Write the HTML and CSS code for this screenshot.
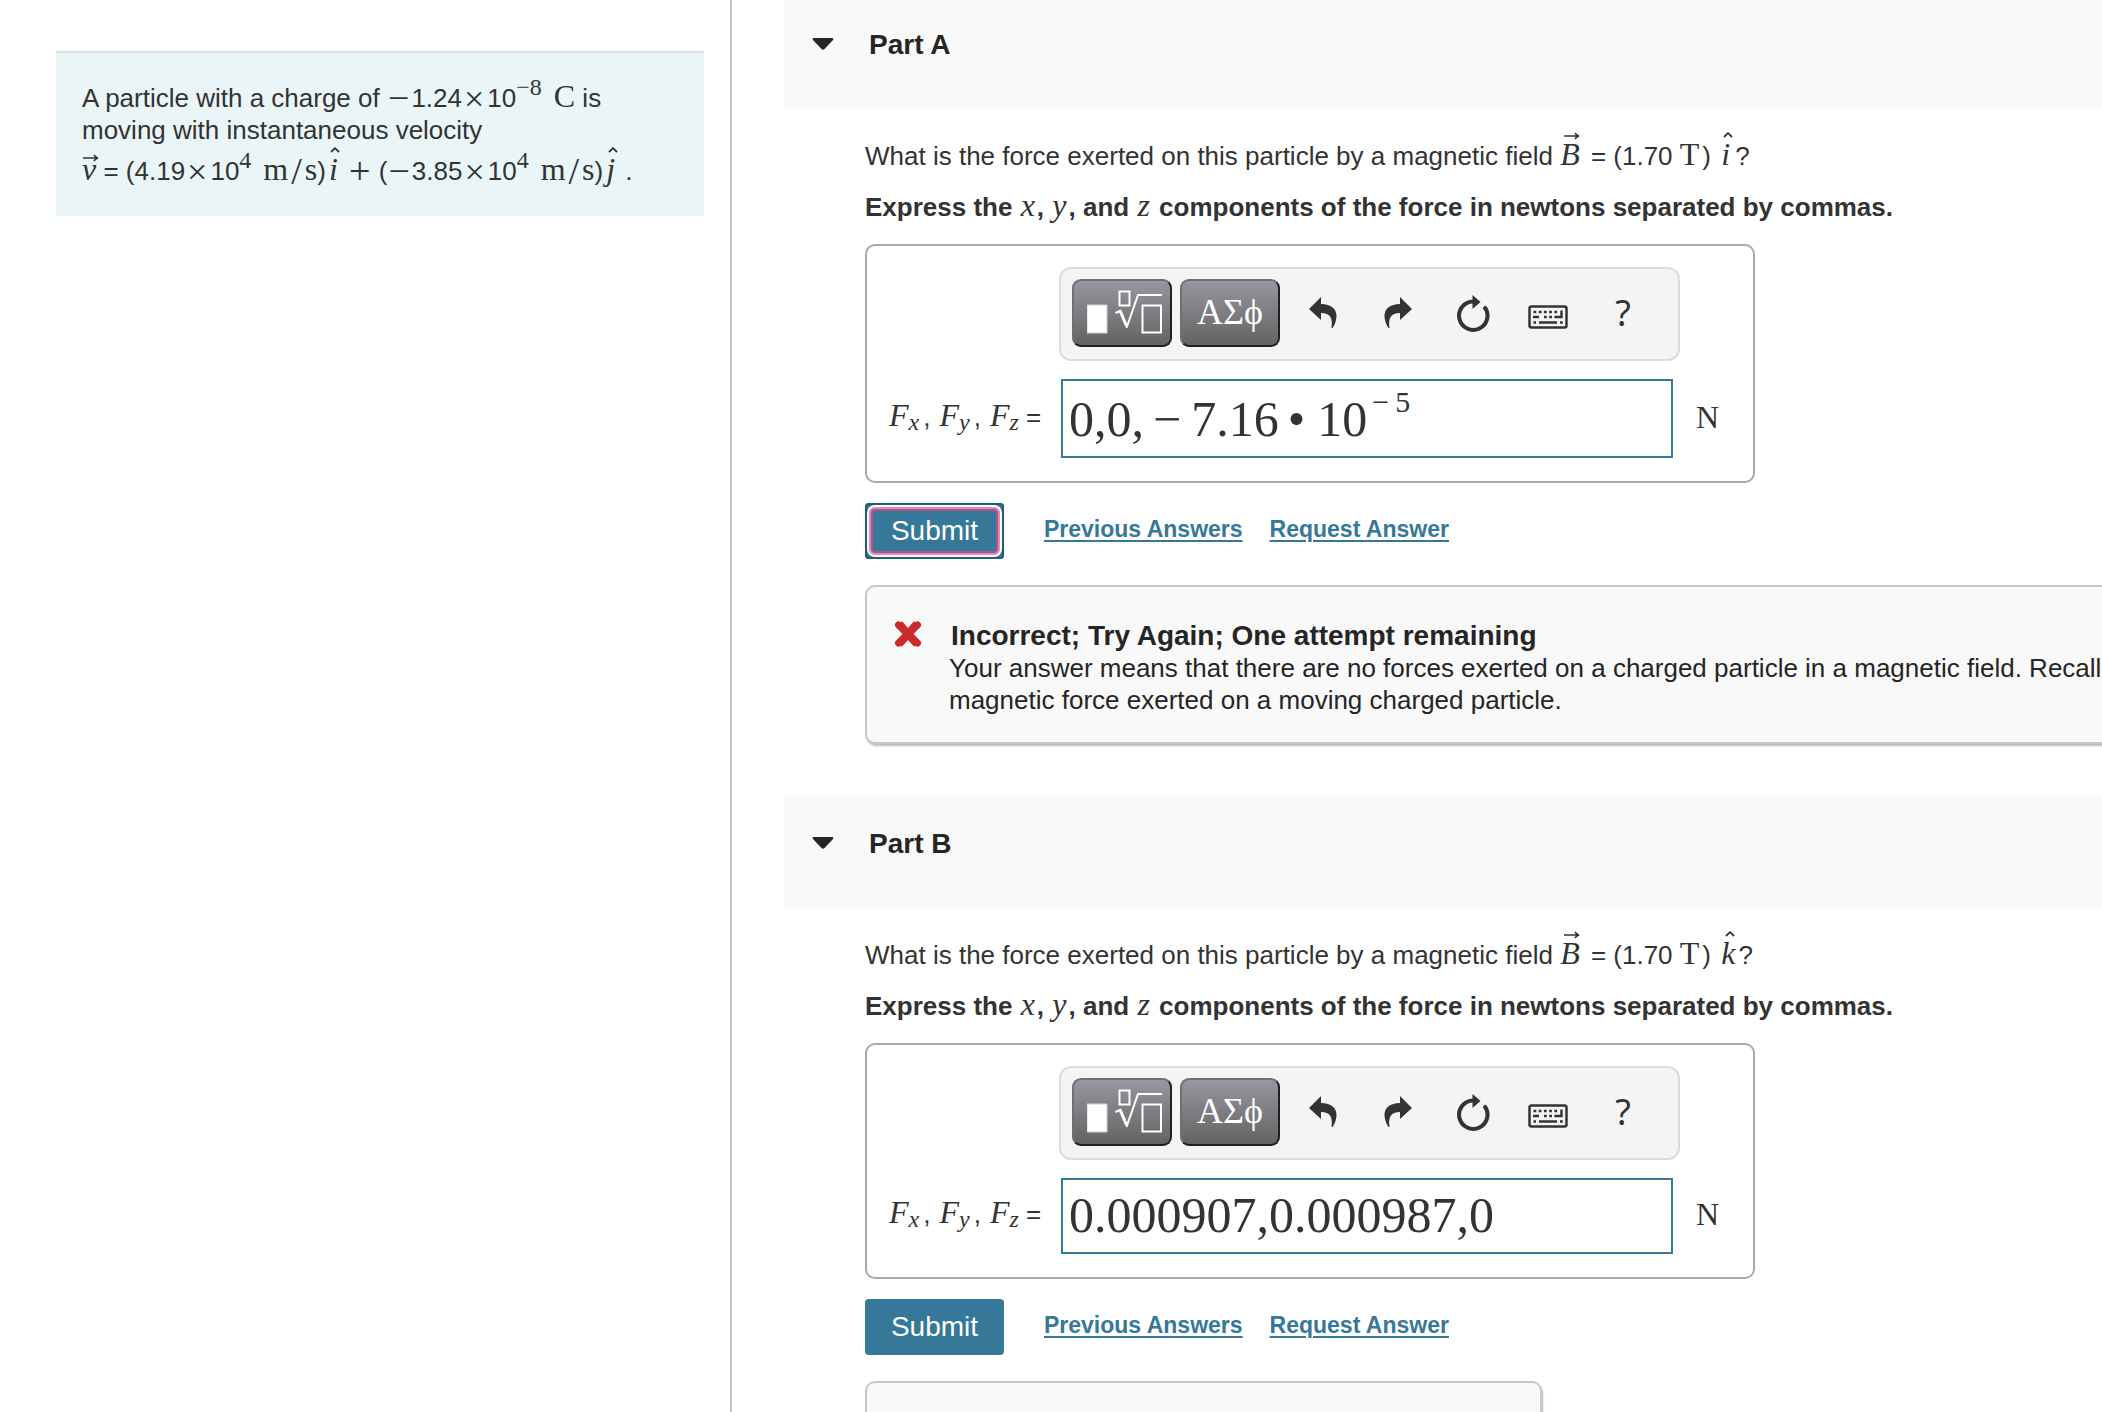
FILE: index.html
```html
<!DOCTYPE html>
<html lang="en">
<head>
<meta charset="utf-8">
<title>Force on a moving charge</title>
<link rel="stylesheet" href="styles.css">
</head>
<body>
<svg class="sprite" aria-hidden="true">
  <symbol id="vec" viewBox="0 0 16 8"><path d="M0 4H14M11 1Q12.500 3.500 15 4Q12.500 4.500 11 7" fill="none" stroke="currentColor" stroke-width="1.500"/></symbol>
  <symbol id="hat" viewBox="0 0 10 6"><path d="M1 5L5 1.200L9 5" fill="none" stroke="currentColor" stroke-width="1.800"/></symbol>
  <symbol id="caret" viewBox="0 0 22 12"><path d="M1.500 0H20.500Q22 .500 21 2L12.500 11Q11 12.500 9.500 11L1 2Q0 .500 1.500 0Z" fill="currentColor"/></symbol>
  <symbol id="template" viewBox="0 0 76 44">
    <path d="M0 15H20V43H0Z" fill="#fff" stroke="#cfcfd2"/>
    <path d="M32.500 1.500H42.500V15.500H32.500Z" fill="none" stroke="#fff" stroke-width="2"/>
    <path d="M55.500 15.500H74V42.500H55.500Z" fill="none" stroke="#fff" stroke-width="2"/>
    <path d="M28.500 23L34 20.500" fill="none" stroke="#fff" stroke-width="2"/>
    <path d="M33 20.500L39.500 36" fill="none" stroke="#fff" stroke-width="3"/>
    <path d="M39.500 38L51 5H75" fill="none" stroke="#fff" stroke-width="2"/>
  </symbol>
  <symbol id="undo" viewBox="0 0 28 32"><path d="M0 12L12 0V7C22 7 28 12 27.500 20C27 25 25 29 23.500 31H22.500C24 21 21 16 12 16V23Z" fill="currentColor"/></symbol>
  <symbol id="redo" viewBox="0 0 28 32"><path d="M28 12L16 0V7C6 7 0 12 .500 20C1 25 3 29 4.500 31H5.500C4 21 7 16 16 16V23Z" fill="currentColor"/></symbol>
  <symbol id="reset" viewBox="0 0 34 38"><path d="M17 7.500A14.200 14.200 0 1 0 28.500 13" fill="none" stroke="currentColor" stroke-width="4"/><path d="M16.500 1L24.500 8L16.500 15Z" fill="currentColor"/><path d="M26.500 14.500L29 11.500L32 16Z" fill="currentColor"/></symbol>
  <symbol id="keyboard" viewBox="0 0 40 24">
    <rect x="1.500" y="1.500" width="37" height="21" rx="2" fill="none" stroke="currentColor" stroke-width="2.500"/>
    <path d="M5.500 7H31M16 12H29M5.500 17.500H8M32 17.500H35" fill="none" stroke="currentColor" stroke-width="2.400" stroke-dasharray="2.800 2.400"/>
    <path d="M5 12H11M11 17.500H29M29 12H34.500M33.500 5.500V13" fill="none" stroke="currentColor" stroke-width="2.400"/>
  </symbol>
  <symbol id="cross" viewBox="0 0 28 28"><path d="M5 4L23 24M23 4L5 24" fill="none" stroke="#cb2a2d" stroke-width="8"/><path d="M4.500 5L23.500 23M23.500 5L4.500 23" fill="none" stroke="#cb2a2d" stroke-width="7" stroke-linecap="round"/></symbol>
</svg>
<div class="page">
  <aside class="sidebar">
    <section class="problem">
      <p>A particle with a charge of <span class="op neg">−</span>1.24<span class="op">×</span>10<sup class="exp">−8</sup><span class="unit-sym">C</span> is</p>
      <p>moving with instantaneous velocity</p>
      <p class="formula"><span class="var accent">v<svg class="vec"><use href="#vec"/></svg></span> = (4.19<span class="op">×</span>10<sup class="exp">4</sup><span class="unit-sym">m<span class="slash">/</span>s</span>)<span class="var accent unit-vec">i<svg class="hat"><use href="#hat"/></svg></span> <span class="op plus">+</span> (<span class="op neg">−</span>3.85<span class="op">×</span>10<sup class="exp">4</sup><span class="unit-sym">m<span class="slash">/</span>s</span>)<span class="var accent unit-vec">j<svg class="hat"><use href="#hat"/></svg></span> .</p>
    </section>
  </aside>
  <main class="content">
    <section class="part">
      <header class="part-header"><svg class="caret"><use href="#caret"/></svg><h2>Part A</h2></header>
      <div class="part-body">
        <p class="question">What is the force exerted on this particle by a magnetic field <span class="var accent field-vec">B<svg class="vec"><use href="#vec"/></svg></span> = (1.70 <span class="sym">T</span>) <span class="var accent unit-vec">i<svg class="hat"><use href="#hat"/></svg></span>&#8202;?</p>
        <p class="instruction">Express the <span class="var">x</span>, <span class="var">y</span>, and <span class="var">z</span> components of the force in newtons separated by commas.</p>
        <div class="answer-box">
          <div class="toolbar">
            <button class="key" aria-label="Templates"><svg class="template"><use href="#template"/></svg></button>
            <button class="key">ΑΣϕ</button>
            <div class="tools">
              <button class="tool" aria-label="Undo"><svg class="arrow"><use href="#undo"/></svg></button>
              <button class="tool" aria-label="Redo"><svg class="arrow"><use href="#redo"/></svg></button>
              <button class="tool" aria-label="Reset"><svg class="reset"><use href="#reset"/></svg></button>
              <button class="tool" aria-label="Keyboard"><svg class="keyboard"><use href="#keyboard"/></svg></button>
              <button class="tool help">?</button>
            </div>
          </div>
          <div class="answer-row">
            <span class="answer-label" id="label-a"><span class="var">F</span><sub>x</sub><span class="sep">,</span><span class="var">F</span><sub>y</sub><span class="sep">,</span><span class="var">F</span><sub>z</sub> =</span>
            <div class="field" role="textbox" contenteditable="true" aria-labelledby="label-a">0,0,<span class="minus">−</span>7.16<span class="dot">•</span>10<sup class="power"><span>−</span>5</sup></div>
            <span class="answer-unit">N</span>
          </div>
        </div>
        <div class="actions">
          <button class="submit focused">Submit</button>
          <a href="#previous-a">Previous Answers</a>
          <a href="#request-a">Request Answer</a>
        </div>
        <div class="feedback wide">
          <svg class="cross"><use href="#cross"/></svg>
          <div>
            <h3>Incorrect; Try Again; One attempt remaining</h3>
            <p>Your answer means that there are no forces exerted on a charged particle in a magnetic field. Recall<br>magnetic force exerted on a moving charged particle.</p>
          </div>
        </div>
      </div>
    </section>
    <section class="part">
      <header class="part-header"><svg class="caret"><use href="#caret"/></svg><h2>Part B</h2></header>
      <div class="part-body">
        <p class="question">What is the force exerted on this particle by a magnetic field <span class="var accent field-vec">B<svg class="vec"><use href="#vec"/></svg></span> = (1.70 <span class="sym">T</span>) <span class="var accent unit-vec">k<svg class="hat"><use href="#hat"/></svg></span>?</p>
        <p class="instruction">Express the <span class="var">x</span>, <span class="var">y</span>, and <span class="var">z</span> components of the force in newtons separated by commas.</p>
        <div class="answer-box">
          <div class="toolbar">
            <button class="key" aria-label="Templates"><svg class="template"><use href="#template"/></svg></button>
            <button class="key">ΑΣϕ</button>
            <div class="tools">
              <button class="tool" aria-label="Undo"><svg class="arrow"><use href="#undo"/></svg></button>
              <button class="tool" aria-label="Redo"><svg class="arrow"><use href="#redo"/></svg></button>
              <button class="tool" aria-label="Reset"><svg class="reset"><use href="#reset"/></svg></button>
              <button class="tool" aria-label="Keyboard"><svg class="keyboard"><use href="#keyboard"/></svg></button>
              <button class="tool help">?</button>
            </div>
          </div>
          <div class="answer-row">
            <label class="answer-label" for="answer-b"><span class="var">F</span><sub>x</sub><span class="sep">,</span><span class="var">F</span><sub>y</sub><span class="sep">,</span><span class="var">F</span><sub>z</sub> =</label>
            <input class="field" id="answer-b" type="text" value="0.000907,0.000987,0">
            <span class="answer-unit">N</span>
          </div>
        </div>
        <div class="actions">
          <button class="submit">Submit</button>
          <a href="#previous-b">Previous Answers</a>
          <a href="#request-b">Request Answer</a>
        </div>
        <div class="feedback short"></div>
      </div>
    </section>
  </main>
</div>
</body>
</html>
```

FILE: styles.css
```css
* { box-sizing: border-box; }
body {
  margin: 0;
  background: #fff;
  color: #333;
  font: 26px/32px "Liberation Sans", Arial, sans-serif;
}
p, h2, h3 { margin: 0; }
svg { display: block; }
button { margin: 0; padding: 0; font-family: inherit; cursor: pointer; }
.sprite { position: absolute; width: 0; height: 0; }

.page {
  display: grid;
  grid-template-columns: 732px minmax(0, 1fr);
  height: 100vh;
  overflow: hidden;
}
.sidebar { padding: 51px 26px 0 56px; border-right: 2px solid #bdc7d6; }
.problem {
  padding: 29px 0 29px 26px;
  background: #eaf5f7;
  border-top: 2px solid #dadfdf;
}
.formula { padding-top: 9px; white-space: nowrap; }

/* Mathematical notation */
.var, .sym, .op, .unit-sym, .exp, sub { line-height: 0; font-family: "Liberation Serif", "Times New Roman", serif; font-weight: 400; }
.var { font-size: 32px; font-style: italic; }
.sym { margin-right: 3px; font-size: 32px; }
.op { padding: 0 3px 0 2px; font-size: 36px; vertical-align: -4px; }
.op.neg { padding: 0 2px 0 1px; font-size: 38px; vertical-align: -4px; }
.op.plus { padding: 0 1px; font-size: 38px; vertical-align: -4px; }
.unit-sym { margin-left: 12px; font-size: 32px; }
.slash { padding: 0 3px; font-size: 38px; vertical-align: -4px; }
.exp { font-size: 24px; vertical-align: 12px; }
sub { font-size: 24px; font-style: italic; vertical-align: -4px; }
.accent { position: relative; }
.field-vec { margin-right: 4px; }
.unit-vec { margin: 0 3px; }
.instruction .var { margin: 0 2px 0 1px; }
.vec, .hat { position: absolute; left: 50%; }
.vec { width: 16px; height: 8px; margin-left: -6px; top: -4px; }
.formula .vec { top: 3px; }
.hat { width: 10px; height: 6px; margin-left: -3px; top: -4px; }

.content { margin-top: -3px; padding-left: 52px; min-width: 0; overflow: hidden; }
.part-header {
  display: flex;
  align-items: center;
  gap: 35px;
  padding: 32px 28px 48px;
  background: #f9f9f9;
  color: #252525;
}
.caret { width: 22px; height: 12px; margin-bottom: 2px; }
h2, h3 { font-size: 28px; line-height: 32px; font-weight: 700; }
.part-body { padding: 31px 0 52px 81px; }
.question { margin-bottom: 19px; }
.instruction { margin-bottom: 21px; font-weight: 700; }

.answer-box {
  width: 890px;
  padding: 21px 21px 23px;
  border: 2px solid #a9a9a9;
  border-radius: 10px;
}
.toolbar {
  display: flex;
  align-items: flex-start;
  gap: 8px;
  width: 621px;
  height: 94px;
  margin: 0 0 18px 171px;
  padding: 10px 11px;
  background: #f4f4f4;
  border: 2px solid #dcdcdc;
  border-radius: 12px;
}
.key {
  display: flex;
  align-items: center;
  justify-content: center;
  width: 100px;
  height: 68px;
  padding-bottom: 2px;
  color: #fff;
  background: linear-gradient(#98969f, #636363);
  border: 2px solid;
  border-color: #707070 #202020 #202020 #707070;
  border-radius: 9px;
  font: 36px/40px "Liberation Serif", serif;
}
.template { width: 76px; height: 44px; margin-left: 6px; }
.tools { display: flex; gap: 9px; padding-left: 2px; }
.tool {
  display: flex;
  align-items: center;
  justify-content: center;
  width: 66px;
  height: 68px;
  color: #333;
  background: none;
  border: 0;
}
.arrow { width: 28px; height: 32px; }
.reset { width: 34px; height: 38px; }
.keyboard { width: 40px; height: 24px; margin-top: 8px; }
.help { font: 36px/40px "Noto Sans", sans-serif; }

.answer-row { display: flex; align-items: center; }
.answer-label { width: 173px; padding: 0 0 4px 1px; white-space: nowrap; }
.sep { padding: 0 9px 0 4px; }
.field {
  width: 612px;
  height: 76px;
  padding: 0 6px 2px;
  color: #333;
  background: #fff;
  border: 2px solid #36789a;
  border-radius: 0;
  font: 50px/72px "Liberation Serif", "Times New Roman", serif;
  white-space: nowrap;
}
div.field { height: 79px; line-height: 77px; }
.minus { padding: 0 10px 0 9px; }
.dot { padding: 0 12px 0 9px; }
.power { font-size: 30px; line-height: 0; vertical-align: 24px; }
.power span { padding: 0 6px 0 5px; }
.answer-unit { margin-left: 23px; padding-bottom: 4px; font: 32px/32px "Liberation Serif", serif; }

.actions { display: flex; align-items: center; gap: 27px; margin: 20px 0 26px; }
.submit {
  position: relative;
  width: 139px;
  height: 56px;
  margin-right: 13px;
  color: #fff;
  background: #36789a;
  border: 0;
  border-radius: 4px;
  font-size: 28px;
  line-height: 32px;
}
.focused { box-shadow: inset 0 0 0 2px #255b75; }
.focused::after {
  content: "";
  position: absolute;
  inset: 2px;
  border: 2px solid #fff;
  border-radius: 8px;
  box-shadow: inset 0 0 0 2px #e989b8, inset 0 0 0 4px #a5588e;
}
.actions a { padding-bottom: 4px; color: #36789a; font-size: 23px; font-weight: 700; text-underline-offset: 3px; text-decoration-thickness: 2px; }

.feedback {
  display: flex;
  gap: 27px;
  padding: 33px 27px 26px;
  color: #252525;
  background: #f9f9f9;
  border: 2px solid #c7c7c7;
  border-radius: 10px;
  box-shadow: 1px 2px 2px #bbb;
}
.feedback h3 { padding-left: 2px; }
.feedback.wide { margin-right: -60px; white-space: nowrap; }
.feedback.short { width: 677px; height: 160px; }
.cross { width: 28px; height: 28px; }
```
